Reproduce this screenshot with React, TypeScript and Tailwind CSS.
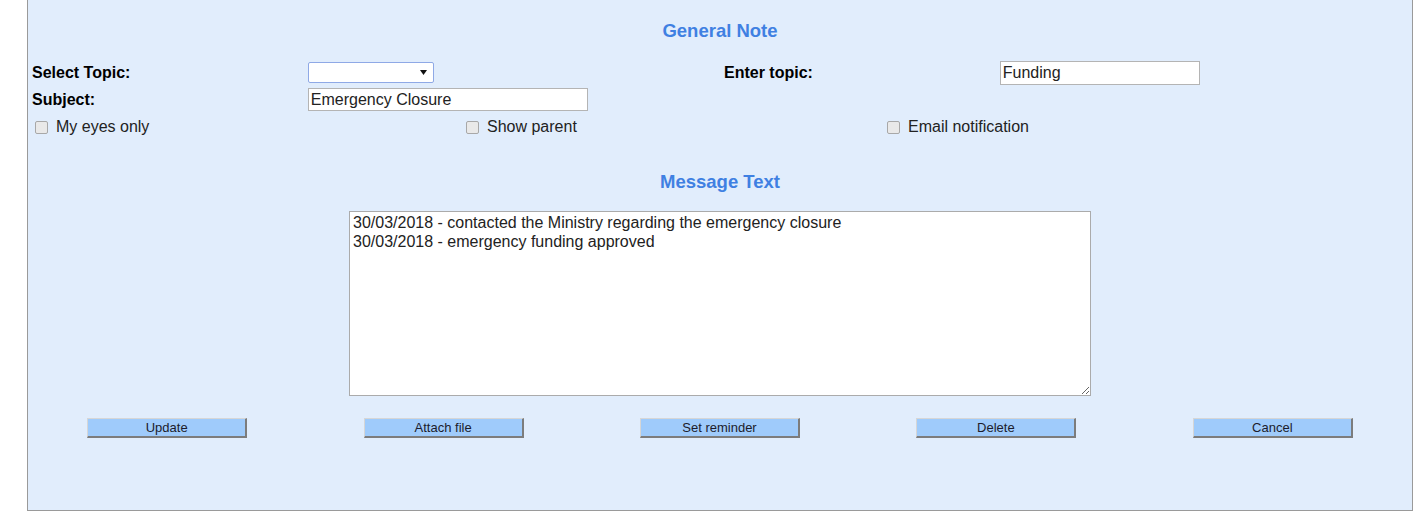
const font = { fontFamily: '"Liberation Sans", Arial, sans-serif' };

const Checkbox = ({ label }: { label: string }) => (
  <label className="flex items-center gap-[8px] text-[16px] text-[#222]">
    <span className="inline-block w-[13px] h-[13px] rounded-[2px] border border-[#a8a8a8] bg-[#e9e9e9]" />
    {label}
  </label>
);

const ActionButton = ({ children }: { children: string }) => (
  <div className="flex justify-center">
    <button className="w-[160px] h-[20px] bg-[#9fcbfb] border border-t-[#d6d6d6] border-l-[#d6d6d6] border-r-2 border-b-2 border-r-[#7c7c7c] border-b-[#7c7c7c] text-[13px] leading-none text-[#1c1c2c]">
      {children}
    </button>
  </div>
);

const App = () => {
  return (
    <div className="min-h-screen w-full bg-white" style={font}>
      <main className="ml-[27px] w-[1386px] h-[511px] bg-[#e1edfc] border-l border-r border-b border-[#9a9a9a] flex flex-col">

        {/* Title */}
        <h1 className="pt-[20px] h-[41px] leading-[22px] text-center text-[18.5px] font-bold text-[#3f80e2]">
          General Note
        </h1>

        {/* Topic / subject rows */}
        <section className="mt-[18px] grid grid-cols-[20%_30%_20%_30%]">
          <div className="h-[27px] pl-[4px] flex items-center text-[16px] font-bold text-black">Select Topic:</div>
          <div className="h-[27px] px-[3px] flex items-center">
            <div className="w-[126px] h-[21px] bg-white border border-[#8fa9e6] rounded-[2px] flex items-center justify-end pr-[6px]">
              <svg width="7" height="5" viewBox="0 0 7 5">
                <polygon points="0,0 7,0 3.5,5" fill="#111" />
              </svg>
            </div>
          </div>
          <div className="h-[27px] pl-[4px] flex items-center text-[16px] font-bold text-black">Enter topic:</div>
          <div className="h-[27px] px-[3px] flex items-center">
            <input
              readOnly
              value="Funding"
              className="w-[200px] h-[24px] bg-white border border-[#b4b4b4] px-[2px] text-[16px] text-[#222] outline-none"
            />
          </div>

          <div className="h-[27px] pl-[4px] flex items-center text-[16px] font-bold text-black">Subject:</div>
          <div className="h-[27px] px-[3px] flex items-center">
            <input
              readOnly
              value="Emergency Closure"
              className="w-[280px] h-[23px] bg-white border border-[#b4b4b4] px-[2px] text-[16px] text-[#222] outline-none"
            />
          </div>
          <div />
          <div />
        </section>

        {/* Options */}
        <section className="h-[28px] pl-[7px] grid grid-cols-[431px_421px_1fr] items-center">
          <Checkbox label="My eyes only" />
          <Checkbox label="Show parent" />
          <Checkbox label="Email notification" />
        </section>

        {/* Message */}
        <h2 className="mt-[30px] h-[22px] leading-[22px] text-center text-[18.5px] font-bold text-[#3f80e2]">
          Message Text
        </h2>
        <div className="mt-[18px] flex justify-center">
          <textarea
            readOnly
            value={"30/03/2018 - contacted the Ministry regarding the emergency closure\n30/03/2018 - emergency funding approved"}
            className="w-[742px] h-[185px] bg-white border border-[#ababab] px-[3px] pt-[1px] text-[16px] leading-[19px] text-[#222] outline-none"
            style={font}
          />
        </div>

        {/* Actions */}
        <section className="mt-[22px] px-[1px] grid grid-cols-5">
          <ActionButton>Update</ActionButton>
          <ActionButton>Attach file</ActionButton>
          <ActionButton>Set reminder</ActionButton>
          <ActionButton>Delete</ActionButton>
          <ActionButton>Cancel</ActionButton>
        </section>

      </main>
    </div>
  );
};

export default App;
